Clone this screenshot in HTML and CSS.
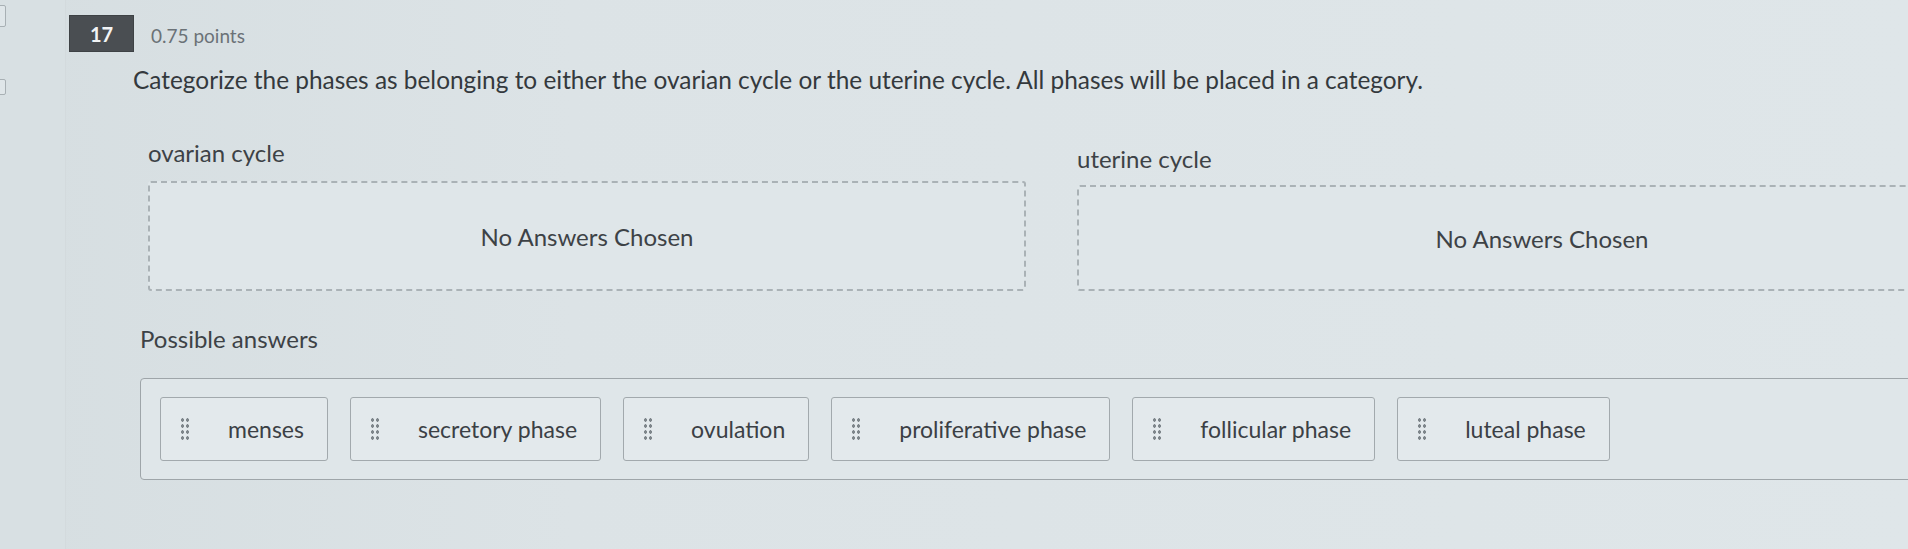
FILE: index.html
```html
<!DOCTYPE html>
<html lang="en">
<head>
<meta charset="utf-8">
<title>Question 17</title>
<link rel="stylesheet" href="styles.css">
</head>
<body>
<div class="page">
  <aside class="sidebar">
    <span class="edge-box edge-box-1"></span>
    <span class="edge-box edge-box-2"></span>
  </aside>
  <main class="main">
    <div class="q-header">
      <div class="q-num">17</div>
      <div class="q-points">0.75 points</div>
    </div>
    <p class="q-text">Categorize the phases as belonging to either the ovarian cycle or the uterine cycle. All phases will be placed in a category.</p>

    <div class="categories">
      <section class="category">
        <h3 class="cat-label">ovarian cycle</h3>
        <div class="drop-zone">No Answers Chosen</div>
      </section>
      <section class="category category-wide">
        <h3 class="cat-label">uterine cycle</h3>
        <div class="drop-zone">No Answers Chosen</div>
      </section>
    </div>

    <h3 class="pa-label">Possible answers</h3>
    <div class="answers">
      <div class="chip"><span class="grip"></span><span class="chip-text">menses</span></div>
      <div class="chip"><span class="grip"></span><span class="chip-text">secretory phase</span></div>
      <div class="chip"><span class="grip"></span><span class="chip-text">ovulation</span></div>
      <div class="chip"><span class="grip"></span><span class="chip-text">proliferative phase</span></div>
      <div class="chip"><span class="grip"></span><span class="chip-text">follicular phase</span></div>
      <div class="chip"><span class="grip"></span><span class="chip-text">luteal phase</span></div>
    </div>
  </main>
</div>
</body>
</html>
```

FILE: styles.css
```css
html, body {
  margin: 0;
  padding: 0;
}
body {
  width: 1908px;
  height: 549px;
  overflow: hidden;
  background: linear-gradient(90deg, #d6dee1 0%, #dce3e6 30%, #dfe6e9 100%);
  font-family: Lato, "Open Sans", "Liberation Sans", sans-serif;
  color: #3b4045;
}
.page {
  display: flex;
  height: 549px;
}
.sidebar {
  width: 66px;
  flex: none;
  border-right: 1px solid #d3dadd;
  display: flex;
  flex-direction: column;
  padding-top: 5px;
  box-sizing: border-box;
  background: #d8e0e3;
}
.edge-box {
  display: block;
  width: 18px;
  height: 20px;
  margin-left: -14px;
  border: 1.5px solid #a8b0b4;
  border-radius: 2px;
  background: #dfe6e9;
}
.edge-box-2 {
  margin-top: 52px;
  height: 14px;
}
.main {
  flex: 1;
  padding-left: 3px;
  min-width: 0;
}
.q-header {
  display: flex;
  align-items: center;
  margin-top: 15px;
  height: 37px;
}
.q-num {
  width: 65px;
  height: 37px;
  background: #4a4e52;
  color: #f2f4f5;
  font-weight: 700;
  font-size: 20px;
  display: flex;
  align-items: center;
  justify-content: center;
  box-shadow: inset 0 0 0 1px #3e4245;
}
.q-points {
  margin-left: 17px;
  font-size: 19px;
  color: #6b7277;
  padding-top: 3px;
}
.q-text {
  margin: 13px 0 0 64px;
  font-size: 24.4px;
  line-height: 30px;
  color: #34393d;
}
.categories {
  display: grid;
  grid-template-columns: 878px 930px;
  column-gap: 51px;
  margin: 44px 0 0 79px;
}
.cat-label {
  margin: 0;
  font-weight: 400;
  font-size: 24px;
  line-height: 28px;
  color: #3d4246;
}
.category-wide .cat-label {
  margin-top: 6px;
}
.drop-zone {
  margin-top: 14px;
  height: 106px;
  border: 2px dashed #aab2b6;
  border-radius: 3px;
  background: #dfe6e9;
  display: flex;
  align-items: center;
  justify-content: center;
  font-size: 24px;
  color: #3d4246;
}
.category-wide .drop-zone {
  margin-top: 12px;
  height: 102px;
}
.pa-label {
  margin: 34px 0 0 71px;
  font-weight: 400;
  font-size: 24px;
  line-height: 28px;
  color: #3d4246;
}
.answers {
  margin: 25px 0 0 71px;
  width: 1850px;
  height: 102px;
  box-sizing: border-box;
  border: 1.5px solid #9ea5a9;
  border-radius: 4px;
  background: #dfe6e9;
  display: flex;
  align-items: center;
  gap: 22px;
  padding-left: 19px;
}
.chip {
  height: 64px;
  box-sizing: border-box;
  border: 1.5px solid #a2a9ad;
  border-radius: 3px;
  background: #e3e9ec;
  display: flex;
  align-items: center;
  padding: 0 23px 0 19px;
}
.grip {
  width: 9px;
  height: 24px;
  flex: none;
  background-image: radial-gradient(circle, #7e868b 1.5px, transparent 1.9px);
  background-size: 5px 6px;
  background-position: 0 0;
}
.chip-text {
  margin-left: 39px;
  font-size: 23px;
  color: #3b4045;
  white-space: nowrap;
}
```
